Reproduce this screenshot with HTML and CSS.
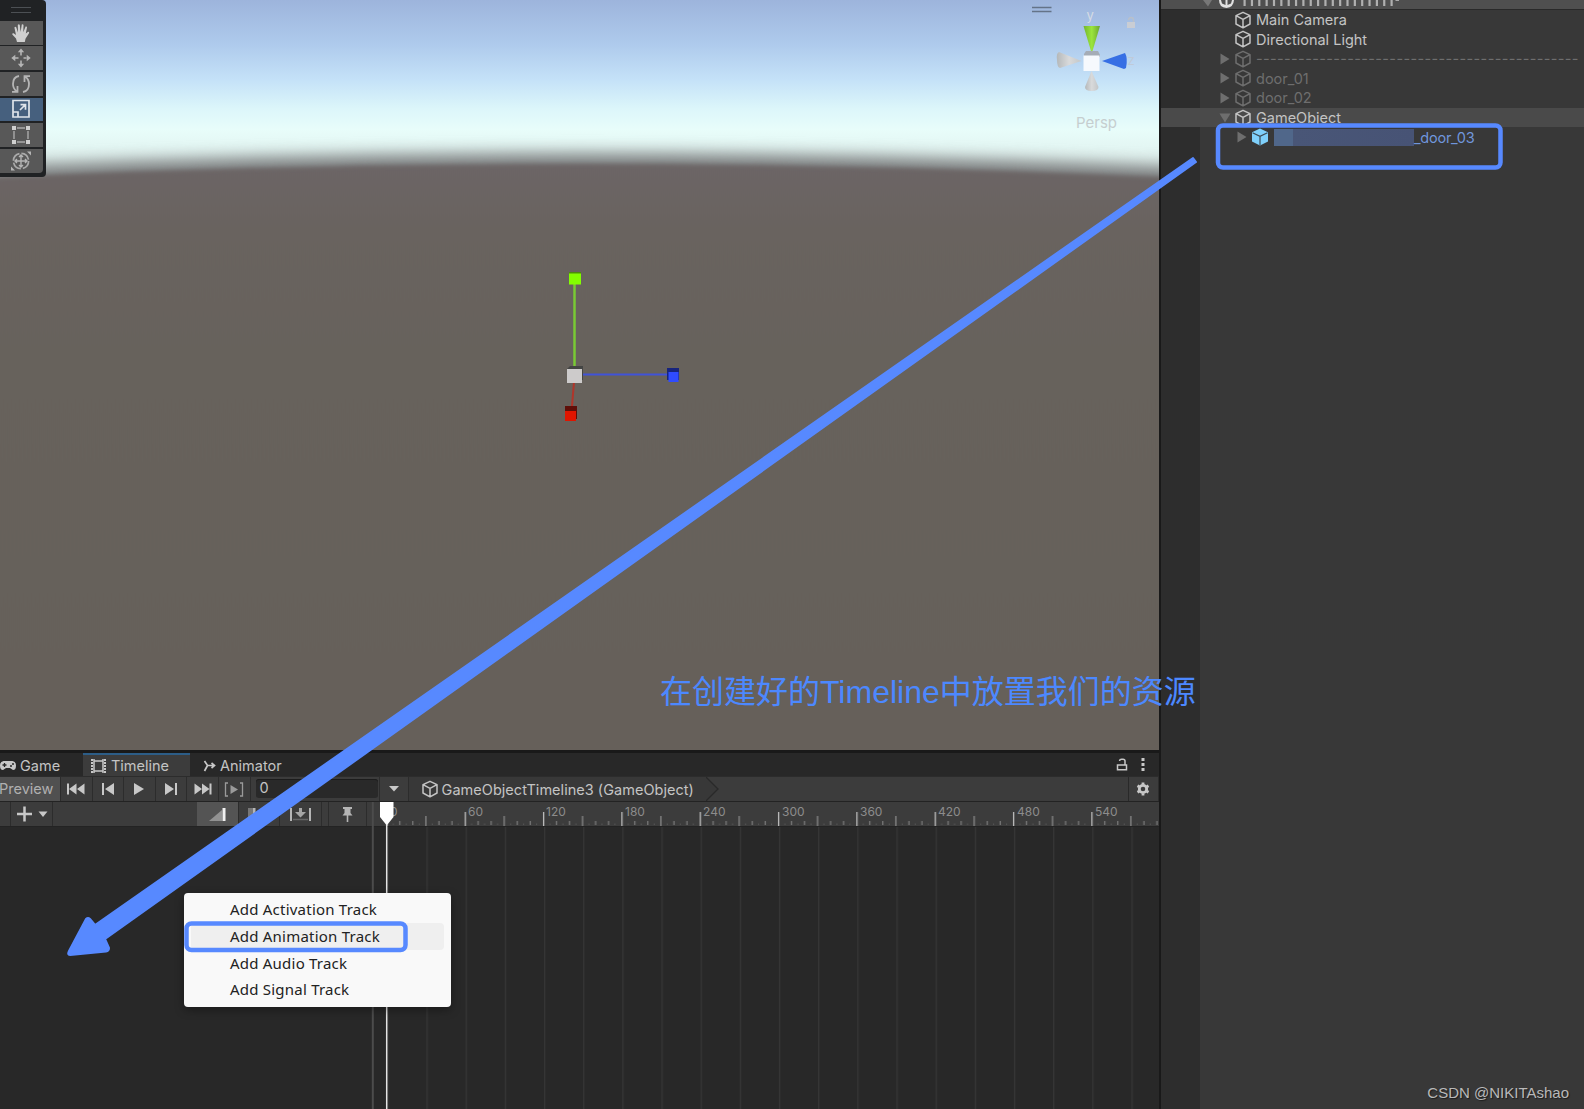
FILE: index.html
```html
<!DOCTYPE html>
<html lang="zh">
<head>
    <meta charset="UTF-8">
    <title>Unity Timeline</title>
    <link rel="stylesheet" href="styles.css">
</head>
<body>
    <svg width="0" height="0" class="defs">
        <symbol id="cube" viewBox="0 0 18 18">
            <path d="M9 1.3 L16 4.7 V13 L9 16.8 L2 13 V4.7 Z M2 4.7 L9 8.3 L16 4.7 M9 8.3 V16.8" fill="none" stroke="currentColor" stroke-width="1.5" stroke-linejoin="round"/>
        </symbol>
        <symbol id="fold" viewBox="0 0 10 12">
            <path d="M0.5 0.5 L9.5 6 L0.5 11.5 Z" fill="currentColor"/>
        </symbol>
    </svg>

    <div class="editor">
        <div class="left">
            <div class="scene">
                <svg class="sky" width="1159" height="750">
                    <defs>
                        <linearGradient id="skyFill" x1="0" y1="0" x2="0" y2="175" gradientUnits="userSpaceOnUse">
                            <stop offset="0" stop-color="#9db4dc"/>
                            <stop offset="0.25" stop-color="#aecaec"/>
                            <stop offset="0.46" stop-color="#c5e2f8"/>
                            <stop offset="0.62" stop-color="#dcf6fa"/>
                            <stop offset="0.74" stop-color="#e8fdfa"/>
                            <stop offset="1" stop-color="#dcebe8"/>
                        </linearGradient>
                        <linearGradient id="groundFill" x1="0" y1="160" x2="0" y2="750" gradientUnits="userSpaceOnUse">
                            <stop offset="0" stop-color="#6c6566"/>
                            <stop offset="0.12" stop-color="#69635f"/>
                            <stop offset="0.35" stop-color="#67625c"/>
                            <stop offset="1" stop-color="#66605a"/>
                        </linearGradient>
                        <filter id="haze" x="-5%" y="-10%" width="110%" height="120%" color-interpolation-filters="sRGB">
                            <feGaussianBlur stdDeviation="0 8"/>
                        </filter>
                        <filter id="edge" color-interpolation-filters="sRGB"><feGaussianBlur stdDeviation="0 2"/></filter>
                    </defs>
                    <rect width="1159" height="300" fill="url(#skyFill)"/>
                    <path d="M-60 169 Q580 138 1220 169 V850 H-60 Z" fill="#7b7d7e" filter="url(#haze)"/>
                    <path d="M-60 180 Q580 148 1220 180 V850 H-60 Z" fill="url(#groundFill)" filter="url(#edge)"/>
                </svg>

                <!-- scale gizmo in the middle of the scene -->
                <svg class="scale-gizmo" width="130" height="170" viewBox="540 260 130 170">
                    <path d="M574.5 284 V366" stroke="#79ca34" stroke-width="2.5"/>
                    <path d="M583 374.5 H670" stroke="#4053d8" stroke-width="2"/>
                    <path d="M574 382 L572 406" stroke="#b0352a" stroke-width="2"/>
                    <rect x="569" y="272" width="12" height="3" fill="#4c8c0c"/>
                    <rect x="569" y="273.500" width="12" height="11" fill="#83ff00"/>
                    <path d="M567 369 L570 366 H583 V380 H567 Z" fill="#444544"/>
                    <rect x="567" y="369" width="15" height="14" fill="#cdcbcb"/>
                    <rect x="565" y="406" width="12" height="13" fill="#5f0e08"/>
                    <rect x="565" y="411" width="11" height="10" fill="#e01500"/>
                    <rect x="667" y="368" width="12" height="12" fill="#17247d"/>
                    <rect x="668.5" y="372" width="10" height="10" fill="#2f4bff"/>
                </svg>

                <div class="tools">
                    <div class="grip"></div>
                    <div class="tool">
                        <svg width="20" height="20" viewBox="0 0 20 20"><path d="M6 19 L5 15.5 L1.3 11.5 Q1 10 2.6 10.3 L5 12 L3.4 4.5 Q4.3 3 5.2 4.2 L7 9.5 L6.8 2 Q7.8 .6 8.8 2 L9.6 9 L10.8 1.6 Q12 .6 12.5 2 L12.3 9.3 L14.6 3.6 Q16 3 16 4.4 L14.8 10.5 L17 8.8 Q18.6 8.7 18 10.2 L14.5 15.7 L13.8 19 Z" fill="#d0d0d0"/></svg>
                    </div>
                    <div class="tool">
                        <svg width="20" height="20" viewBox="0 0 20 20" fill="#b5b5b5"><path d="M10 0.5 L13.2 4.3 H6.8 Z M10 19.5 L6.8 15.7 H13.2 Z M0.3 10 L4.3 6.8 V13.2 Z M19.7 10 L15.7 6.8 V13.2 Z M9.2 4 H10.8 V7.5 H9.2 Z M9.2 12.5 H10.8 V16 H9.2 Z M4 9.2 H7.5 V10.8 H4 Z M12.5 9.2 H16 V10.8 H12.5 Z"/></svg>
                    </div>
                    <div class="tool">
                        <svg width="20" height="20" viewBox="0 0 20 20"><path d="M8 2 Q2 3 2 10 Q2 14.5 5.5 17.3 M1 17.8 H6.5 V12 M12 18 Q18 17 18 10 Q18 5.5 14.5 2.7 M19 2.2 H13.5 V8" fill="none" stroke="#b5b5b5" stroke-width="1.8"/></svg>
                    </div>
                    <div class="tool active">
                        <svg width="20" height="20" viewBox="0 0 20 20"><path d="M2 1.5 H18 V18 H2 Z M2 13 H7 V18 M9 11 L14 6 M9.5 5.7 H14.5 V10.7" fill="none" stroke="#dfe4ea" stroke-width="1.7"/></svg>
                    </div>
                    <div class="tool">
                        <svg width="20" height="20" viewBox="0 0 20 20"><path d="M6 3 H14 M6 17 H14 M3 6 V14 M17 6 V14" stroke="#aaa" stroke-width="1.4"/><path d="M1 1 H5 V5 H1 Z M15 1 H19 V5 H15 Z M1 15 H5 V19 H1 Z M15 15 H19 V19 H15 Z" fill="#d0d0d0"/></svg>
                    </div>
                    <div class="tool">
                        <svg width="20" height="20" viewBox="0 0 20 20"><circle cx="10" cy="10" r="7.6" fill="none" stroke="#aaa" stroke-width="1.7" stroke-dasharray="10 2"/><path d="M10 4 V16 M4 10 H16 M8 6 L10 4 L12 6 M8 14 L10 16 L12 14 M6 8 L4 10 L6 12 M14 8 L16 10 L14 12" fill="none" stroke="#b5b5b5" stroke-width="1.4"/><path d="M16 0.5 H20 V4.5 Z M0 15.5 V19.5 H4 Z" fill="#b5b5b5"/></svg>
                    </div>
                </div>

                <div class="orientation">
                    <svg width="130" height="100" viewBox="1025 0 130 100">
                        <defs>
                            <linearGradient id="coneGrey"><stop offset="0" stop-color="#b4b8ba"/><stop offset="0.5" stop-color="#d9dadb"/><stop offset="1" stop-color="#c3c6c8"/></linearGradient>
                            <linearGradient id="coneGreen"><stop offset="0" stop-color="#73b52c"/><stop offset="0.5" stop-color="#9be53c"/><stop offset="1" stop-color="#6ca630"/></linearGradient>
                        </defs>
                        <path d="M1032 7.5 H1051.500 M1032 11.500 H1051.500" stroke="#647388" stroke-width="1.4"/>
                        <path d="M1083.500 26 H1100 L1092.500 51 H1091 Z" fill="url(#coneGreen)"/>
                        <path d="M1091.500 71 L1085 87 Q1085 91 1091.700 91 Q1098.500 91 1098.500 87 Z" fill="url(#coneGrey)"/>
                        <path d="M1081.500 61 L1059 52 Q1056 53 1057 60 Q1057 67 1060 68 Z" fill="url(#coneGrey)"/>
                        <path d="M1102 61 L1125 53 Q1128 58 1126 68 L1124 69 Z" fill="#376fe4"/>
                        <path d="M1084 54 L1086 51 H1098 L1100 55 V57 H1084 Z" fill="#a5acb6"/>
                        <rect x="1083.500" y="55.500" width="16" height="15.500" fill="#f6f9fd"/>
                        <path d="M1127 22 H1135 V28 H1127 Z" fill="#c9cdd4"/>
                        <path d="M1128.500 20 Q1129 17.500 1131 17.500 Q1133.500 17.500 1133.500 20 V22" fill="none" stroke="#b9c0ca" stroke-width="1.4"/>
                        <text x="1086.500" y="20" class="axis">y</text>
                        <text x="1127.500" y="65" class="axis z">z</text>
                    </svg>
                    <div class="persp">Persp</div>
                </div>
            </div>

            <div class="timeline">
                <div class="tabs">
                    <div class="tab game">
                        <svg width="16" height="12" viewBox="0 0 16 12"><path d="M3.500 1 H12.500 Q16 1.500 16 5.500 Q16 10 13 10 L10 8 H6 L3 10 Q0 10 0 5.500 Q0 1.500 3.500 1 Z" fill="#c8c8c8"/><path d="M2.500 5 H6.500 M4.500 3 V7" stroke="#282828" stroke-width="1.3"/><circle cx="11" cy="6" r="1" fill="#282828"/><circle cx="13" cy="4" r="1" fill="#282828"/></svg>
                        <span>Game</span>
                    </div>
                    <div class="tab selected">
                        <svg width="15" height="14" viewBox="0 0 15 14"><path d="M3 0 V14 M12 0 V14 M3 2 H12 M3 12 H12" stroke="#c8c8c8" stroke-width="1.5"/><path d="M1 0 V14 M14 0 V14" stroke="#c8c8c8" stroke-width="2" stroke-dasharray="2 1"/></svg>
                        <span>Timeline</span>
                    </div>
                    <div class="tab animator">
                        <svg width="13" height="12" viewBox="0 0 13 12"><path d="M1.500 1 L4.500 5.500 H11 M1.500 11 L4.500 5.500 M8.500 3 L11.500 5.500 L8.500 8" fill="none" stroke="#c8c8c8" stroke-width="1.700"/></svg>
                        <span>Animator</span>
                    </div>
                    <div class="tab-actions">
                        <svg width="12" height="13" viewBox="0 0 12 13"><path d="M1.500 7 H10.500 V11.700 H1.500 Z M9 7 V3 Q9 1.200 7 1.200 H5.500 Q3.700 1.200 3.500 3" fill="none" stroke="#c8c8c8" stroke-width="1.500"/></svg>
                        <svg width="4" height="13" viewBox="0 0 4 13" fill="#c8c8c8"><path d="M.5 0 H3.500 V3 H.5 Z M.5 5 H3.500 V8 H.5 Z M.5 10 H3.500 V13 H.5 Z"/></svg>
                    </div>
                </div>

                <div class="controls">
                    <div class="preview">Preview</div>
                    <div class="btn"><svg width="18" height="12" viewBox="0 0 18 12" fill="#c8c8c8"><path d="M0 .5 H2 V11.500 H0 Z M9.500 .5 V11.500 L2 6 Z M17.500 .5 V11.500 L10 6 Z"/></svg></div>
                    <div class="btn"><svg width="12" height="12" viewBox="0 0 12 12" fill="#c8c8c8"><path d="M0 0 H2 V12 H0 Z M12 0 V12 L3 6 Z"/></svg></div>
                    <div class="btn"><svg width="10" height="12" viewBox="0 0 10 12" fill="#c8c8c8"><path d="M0 0 L10 6 L0 12 Z"/></svg></div>
                    <div class="btn"><svg width="12" height="12" viewBox="0 0 12 12" fill="#c8c8c8"><path d="M10 0 H12 V12 H10 Z M0 0 V12 L9 6 Z"/></svg></div>
                    <div class="btn"><svg width="18" height="12" viewBox="0 0 18 12" fill="#c8c8c8"><path d="M15.500 .5 H17.500 V11.500 H15.500 Z M.5 .5 V11.500 L8 6 Z M8 .5 V11.500 L15.500 6 Z"/></svg></div>
                    <div class="btn range"><svg width="20" height="15" viewBox="0 0 20 15"><path d="M4 1 H1.500 V14 H4 M16 1 H18.500 V14 H16" fill="none" stroke="#9a9a9a" stroke-width="1.300"/><path d="M6.500 3 L14 7.500 L6.500 12 Z" fill="#9a9a9a"/></svg></div>
                    <div class="frame-cell"><div class="frame">0</div></div>
                    <div class="drop"><svg width="10" height="6" viewBox="0 0 10 6"><path d="M0 0 H10 L5 5.500 Z" fill="#c8c8c8"/></svg></div>
                    <div class="crumb">
                        <svg width="18" height="18" class="cube"><use href="#cube"/></svg>
                        <span>GameObjectTimeline3 (GameObject)</span>
                    </div>
                    <svg class="crumb-end" width="14" height="24" viewBox="0 0 14 24"><path d="M0 0 L12 12 L0 24 Z" fill="#383838"/><path d="M0 0 L12 12 L0 24" fill="none" stroke="#292929" stroke-width="1.300"/></svg>
                    <div class="gear"><svg width="14" height="14" viewBox="0 0 14 14"><circle cx="7" cy="7" r="3.700" fill="none" stroke="#c8c8c8" stroke-width="2.800"/><path d="M7 .6 V2.600 M7 11.400 V13.400 M1.500 3.800 L3.200 4.800 M10.800 9.200 L12.500 10.200 M12.500 3.800 L10.800 4.800 M3.200 9.200 L1.500 10.200" stroke="#c8c8c8" stroke-width="2.800"/></svg></div>
                </div>

                <div class="header-row">
                    <div class="add"><svg width="32" height="16" viewBox="0 0 32 16"><path d="M7.500 .5 V15.500 M0 8 H15" stroke="#c8c8c8" stroke-width="2.500"/><path d="M21.500 5.500 H30.500 L26 11 Z" fill="#c8c8c8"/></svg></div>
                    <div class="spacer"></div>
                    <div class="mode on"><svg width="17" height="13" viewBox="0 0 17 13"><path d="M0 13 L13 2 V13 Z" fill="#929292"/><path d="M13.500 0 H16.500 V13 H13.500 Z" fill="#f0f0f0"/></svg></div>
                    <div class="mode"><svg width="22" height="13" viewBox="0 0 22 13"><path d="M0 0 H4 V13 H0 Z" fill="#777"/><path d="M4.500 0 H7.500 V13 H4.500 Z" fill="#b5b5b5"/></svg></div>
                    <div class="mode"><svg width="21" height="13" viewBox="0 0 21 13"><path d="M1 0 V13 M20 0 V13" stroke="#b5b5b5" stroke-width="2"/><path d="M3 11.500 H18" stroke="#666" stroke-width="1.500"/><path d="M9 0 H12 V4 H16 L10.500 9.500 L5 4 H9 Z" fill="#a5a5a5"/></svg></div>
                    <div class="gap"></div>
                    <div class="pin"><svg width="11" height="15" viewBox="0 0 11 15" fill="#b5b5b5"><path d="M1 0 H10 V2 H8.500 V6 L10.500 8.500 H6.300 V15 H4.700 V8.500 H.5 L2.500 6 V2 H1 Z"/></svg></div>
                    <div class="ruler">
                        <svg width="791" height="25" viewBox="368 802 791 25">
                            <defs>
                                <pattern id="ticks" x="387.300" y="802" width="78.330" height="25" patternUnits="userSpaceOnUse">
                                    <rect x="0" y="10" width="1.300" height="14" fill="#bdbdbd"/>
                                    <rect x="39" y="14" width="1.200" height="10" fill="#8d8d8d"/>
                                    <path d="M13.500 19 V23 M26.500 19 V23 M52.700 19 V23 M65.700 19 V23" stroke="#777" stroke-width="1.300"/>
                                    <path d="M7 21.500 V23 M20 21.500 V23 M33 21.500 V23 M46 21.500 V23 M59 21.500 V23 M72 21.500 V23" stroke="#555"/>
                                </pattern>
                            </defs>
                            <rect x="387" y="802" width="772" height="24" fill="url(#ticks)"/>
                            <g class="ruler-text">
                                <text x="391" y="816">0</text>
                                <text x="469" y="816">60</text>
                                <text x="547" y="816">120</text>
                                <text x="626" y="816">180</text>
                                <text x="704" y="816">240</text>
                                <text x="783" y="816">300</text>
                                <text x="861" y="816">360</text>
                                <text x="939" y="816">420</text>
                                <text x="1018" y="816">480</text>
                                <text x="1096" y="816">540</text>
                            </g>
                        </svg>
                    </div>
                </div>

                <div class="tracks">
                    <svg width="791" height="283" viewBox="368 826 791 283">
                        <defs>
                            <pattern id="grid" x="387.300" y="826" width="39.165" height="20" patternUnits="userSpaceOnUse">
                                <rect width="1.200" height="20" fill="#363636"/>
                            </pattern>
                        </defs>
                        <rect x="387" y="826" width="772" height="283" fill="url(#grid)"/>
                    </svg>
                </div>

                <svg class="playhead" width="30" height="307" viewBox="368 802 30 307">
                    <path d="M372.800 802 V1109" stroke="#4c4c4c" stroke-width="2"/>
                    <path d="M386.700 820 V1109" stroke="#e4e4e4" stroke-width="1.500"/>
                    <path d="M380 802 H393.500 V817 L387.500 824.500 H386 L380 817 Z" fill="#fff"/>
                </svg>

                <div class="menu">
                    <div class="item">Add Activation Track</div>
                    <div class="item hover">Add Animation Track</div>
                    <div class="item">Add Audio Track</div>
                    <div class="item">Add Signal Track</div>
                </div>
            </div>
        </div>

        <div class="hierarchy">
            <div class="scene-row">
                <svg width="200" height="10" viewBox="1200 0 200 10">
                    <path d="M1203 0 H1212 L1208 6.500 Z" fill="#777"/>
                    <path d="M1219 0 Q1219 7.500 1226.500 8 Q1233.500 7.500 1234 0 H1232 L1231 3.500 L1227.500 5 V0 H1225.500 V5 L1222 3.500 L1221 0 Z" fill="#e0e0e0"/>
                    <path d="M1243.500 3 H1393" stroke="#b0b0b0" stroke-width="6" stroke-dasharray="2.200 5.150"/>
                    <path d="M1395.500 0 H1399" stroke="#aaa" stroke-width="2"/>
                </svg>
            </div>
            <div class="row"><svg width="18" height="18" class="cube"><use href="#cube"/></svg><span>Main Camera</span></div>
            <div class="row"><svg width="18" height="18" class="cube"><use href="#cube"/></svg><span>Directional Light</span></div>
            <div class="row off folded"><svg width="10" height="12" class="fold"><use href="#fold"/></svg><svg width="18" height="18" class="cube"><use href="#cube"/></svg><span class="dashes">----------------------------------------------</span></div>
            <div class="row off folded"><svg width="10" height="12" class="fold"><use href="#fold"/></svg><svg width="18" height="18" class="cube"><use href="#cube"/></svg><span>door_01</span></div>
            <div class="row off folded"><svg width="10" height="12" class="fold"><use href="#fold"/></svg><svg width="18" height="18" class="cube"><use href="#cube"/></svg><span>door_02</span></div>
            <div class="row folded current"><svg width="10" height="12" class="fold open"><use href="#fold"/></svg><svg width="18" height="18" class="cube"><use href="#cube"/></svg><span>GameObject</span></div>
            <div class="row prefab">
                <svg width="10" height="12" class="fold"><use href="#fold"/></svg>
                <svg width="18" height="18" viewBox="0 0 18 18"><path d="M9 .5 L17 4.300 V13.500 L9 17.500 L1 13.500 V4.300 Z" fill="#7fd0fb"/><path d="M1.500 4.700 L9 8.300 L16.500 4.700 M9 8.300 V17" fill="none" stroke="#3b4a55" stroke-width="1.200"/></svg>
                <span class="mask"></span><span class="prefab-name">_door_03</span>
            </div>
            <div class="watermark">CSDN @NIKITAshao</div>
        </div>
    </div>

    <!-- annotations on top of the editor -->
    <svg class="notes" width="1584" height="1109">
        <path d="M1193 158 L1196 162 L105 939 L109 948 Q109 951 106 951.500 L70 955 Q67 955 69 951 L86 919 Q88 917 90 919 L95 925 Z" fill="#5789ff" stroke="#5789ff" stroke-width="2" stroke-linejoin="round"/>
        <rect x="1218" y="125.500" width="282.500" height="42" rx="5" fill="none" stroke="#5789ff" stroke-width="4.500"/>
        <rect x="186.500" y="923.500" width="219" height="26.500" rx="5" fill="none" stroke="#5789ff" stroke-width="4.500"/>
    </svg>
    <div class="caption">在创建好的Timeline中放置我们的资源</div>
</body>
</html>
```
FILE: styles.css
```css
body {
    margin: 0;
    background-color: #191919;
    color: #c4c4c4;
    font-family: Inter, "Noto Sans", sans-serif;
    font-size: 14.5px;
    overflow: hidden;
}

svg {
    display: block;
    flex-shrink: 0;
}

.defs {
    position: absolute;
}

.editor {
    display: flex;
    width: 1584px;
    height: 1109px;
}

.left {
    width: 1159px;
    margin-right: 2px;
}

/* scene view */
.scene {
    position: relative;
    height: 750px;
    overflow: hidden;
}

.scale-gizmo {
    position: absolute;
    left: 540px;
    top: 260px;
    overflow: visible;
}

.tools {
    position: absolute;
    left: 0;
    top: 0;
    width: 43px;
    height: 173px;
    padding: 0 3px 4px 0;
    background-color: #202224;
    border-radius: 0 4px 4px 0;
    display: flex;
    flex-direction: column;
    gap: 1.8px;
}

.grip {
    width: 20px;
    height: 4px;
    flex-shrink: 0;
    margin: 7px 0 6px 11px;
    border-top: 1px solid #4c5054;
    border-bottom: 1px solid #4c5054;
}

.tool {
    height: 23.8px;
    flex-shrink: 0;
    display: flex;
    align-items: center;
    justify-content: center;
    background-color: #585858;
}

.tool svg {
    margin-right: 1px;
}

.tool:last-child {
    border-radius: 0 0 4px 0;
}

.tool.active {
    background-color: #46607e;
}

.orientation {
    position: absolute;
    left: 1025px;
    top: 0;
    width: 130px;
}

.axis {
    fill: #d5dbe3;
    font-size: 13px;
}

.axis.z {
    fill: #bfcad8;
}

.persp {
    margin: 14px 0 0 51px;
    font-size: 15px;
    line-height: 18px;
    color: #c6cecf;
}

/* timeline window */
.timeline {
    position: relative;
    height: 356px;
    margin-top: 3px;
    background-color: #282828;
}

.tabs {
    display: flex;
    height: 23px;
}

.tab {
    display: flex;
    align-items: center;
    gap: 4px;
    box-sizing: border-box;
    padding-top: 2px;
}

.tab.game {
    width: 83px;
}

.tab.selected {
    width: 107px;
    padding: 0 0 0 8px;
    gap: 5px;
    border-top: 2px solid #2c5d87;
    background-color: #3c3c3c;
}

.tab.animator {
    padding-left: 13px;
}

.tab-actions {
    display: flex;
    align-items: center;
    gap: 13px;
    margin-left: auto;
    padding-right: 14px;
}

.controls {
    display: flex;
    height: 24px;
    border-top: 1px solid #2c2c2c;
    border-bottom: 1px solid #232323;
    background-color: #3c3c3c;
}

.preview {
    width: 60px;
    line-height: 24px;
    background-color: #505050;
    border-right: 1px solid #2c2c2c;
    white-space: nowrap;
    color: #b0b0b0;
    text-indent: -1px;
}

.btn,
.drop,
.gear {
    display: flex;
    align-items: center;
    justify-content: center;
    box-sizing: border-box;
    width: 31.6px;
    border-right: 1px solid #2c2c2c;
}

.frame-cell {
    width: 129px;
    padding: 2px 0 0 5px;
    box-sizing: border-box;
    border-right: 1px solid #2c2c2c;
}

.frame {
    width: 118px;
    height: 19px;
    padding-left: 4px;
    line-height: 18px;
    border-radius: 3px;
    background-color: #292929;
    box-shadow: inset 0 1px 0 #1c1c1c;
}

.drop {
    width: 29px;
}

.crumb {
    display: flex;
    align-items: center;
    gap: 3px;
    box-sizing: border-box;
    width: 297px;
    padding-left: 12px;
    background-color: #383838;
    white-space: nowrap;
    letter-spacing: 0.03px;
}

.gear {
    width: 31px;
    margin-left: auto;
    padding-right: 2px;
    border-left: 1px solid #292929;
}

.header-row {
    display: flex;
    height: 24px;
    border-bottom: 1px solid #232323;
    background-color: #3c3c3c;
}

.add {
    display: flex;
    align-items: center;
    box-sizing: border-box;
    width: 43px;
    margin-left: 10px;
    padding-left: 6px;
    border-left: 1px solid #2c2c2c;
    border-right: 1px solid #2c2c2c;
}

.spacer {
    width: 144px;
}

.mode,
.pin {
    display: flex;
    align-items: center;
    justify-content: center;
    box-sizing: border-box;
    width: 41.5px;
    border-right: 1px solid #2c2c2c;
}

.mode.on {
    background-color: #545454;
}

.gap {
    width: 6.5px;
}

.pin {
    width: 39px;
    border-left: 1px solid #2c2c2c;
}

.ruler {
    width: 791px;
}

.ruler-text {
    fill: #8c8c8c;
    font-size: 12px;
}

.tracks {
    display: flex;
    justify-content: flex-end;
}

.playhead {
    position: absolute;
    left: 368px;
    top: 49px;
}

.menu {
    position: absolute;
    left: 184px;
    top: 140px;
    width: 267px;
    height: 114px;
    box-sizing: border-box;
    padding: 3px 7px;
    border-radius: 4px;
    background-color: #f9f9f9;
    box-shadow: 0 3px 10px rgba(0, 0, 0, 0.35);
    color: #222;
    font-family: "Noto Sans", sans-serif;
    font-size: 15px;
    letter-spacing: 0.22px;
}

.item {
    height: 26.8px;
    line-height: 26px;
    padding-left: 39px;
    border-radius: 4px;
}

.item.hover {
    background-color: #efefef;
}

/* hierarchy panel */
.hierarchy {
    position: relative;
    width: 423px;
    background: linear-gradient(to right, #2d2d2d 39px, #383838 39px);
    overflow: hidden;
}

.scene-row {
    height: 9px;
    padding-left: 39px;
    background-color: #4f4f4f;
    border-bottom: 1px solid #292929;
    overflow: hidden;
}

.row {
    display: flex;
    align-items: center;
    gap: 4px;
    height: 19.55px;
    padding-left: 73px;
    white-space: nowrap;
}

.row.folded {
    padding-left: 59px;
}

.row.off {
    color: #6e6e6e;
}

.row.current {
    background-color: #4a4a4a;
}

.row.prefab {
    padding-left: 76px;
    color: #7096dc;
}

.fold {
    color: #6e6e6e;
}

.fold.open {
    transform: rotate(90deg);
}

.dashes {
    letter-spacing: 0.35px;
}

.mask {
    width: 140px;
    height: 17px;
    margin: 1px -4px 0 1px;
    background: linear-gradient(to right, #50678a 19px, #495677 19px, #475375);
}

.prefab-name {
    letter-spacing: -0.25px;
}

.watermark {
    position: absolute;
    right: 15px;
    bottom: 6px;
    font-family: "Liberation Sans", sans-serif;
    font-size: 15px;
    line-height: 20px;
    color: #b9b9b9;
    text-shadow: 1px 1px 1px #1c1c1c;
}

.notes {
    position: absolute;
    left: 0;
    top: 0;
}

.caption {
    position: absolute;
    left: 660px;
    top: 668px;
    font-family: "Liberation Sans", "Noto Sans CJK SC", sans-serif;
    font-size: 32px;
    line-height: 48px;
    color: #4c88ff;
    white-space: nowrap;
}
```
